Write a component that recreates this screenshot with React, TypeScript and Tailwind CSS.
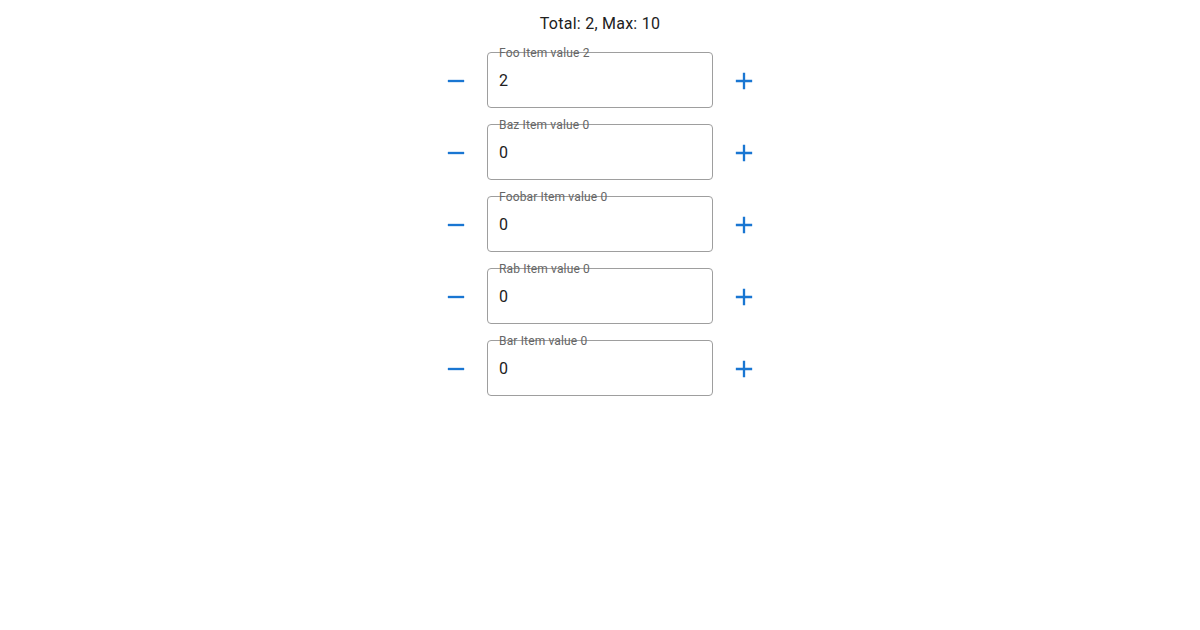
import { useState } from "react";

const ITEMS = ["Foo", "Baz", "Foobar", "Rab", "Bar"];

function MinusIcon() {
  return (
    <svg viewBox="0 0 24 24" className="w-7 h-7" fill="#1976d2">
      <path d="M19 13H5v-2h14v2z" />
    </svg>
  );
}

function PlusIcon() {
  return (
    <svg viewBox="0 0 24 24" className="w-7 h-7" fill="#1976d2">
      <path d="M19 13h-6v6h-2v-6H5v-2h6V5h2v6h6v2z" />
    </svg>
  );
}

export default function App() {
  const [values, setValues] = useState<number[]>([2, 0, 0, 0, 0]);
  const max = 10;
  const total = values.reduce((a, b) => a + b, 0);

  const change = (i: number, d: number) => {
    setValues(v => v.map((x, j) => (j === i ? Math.max(0, x + d) : x)));
  };

  return (
    <div className="w-[1200px] h-[630px] bg-white flex flex-col items-center pt-[12px] font-['Roboto',sans-serif] text-[#212121]">
      <div className="text-base leading-6 tracking-[0.25px]">Total: {total}, Max: {max}</div>
      <div className="flex flex-col gap-4 mt-[16px]">
        {ITEMS.map((name, i) => (
          <div key={name} className="flex items-center">
            <button onClick={() => change(i, -1)} className="w-10 h-10 flex items-center justify-center rounded-full mt-[2px]">
              <MinusIcon />
            </button>
            <div className="relative w-[226px] h-14 mx-[11px] border border-[#9e9e9e] rounded">
              <span className="absolute left-[11px] -top-[8px] text-xs leading-4 text-[#666666] whitespace-nowrap tracking-[0.15px]">
                {name} Item value {values[i]}
              </span>
              <input
                className="w-full h-full pl-[11px] pr-3 text-base outline-none bg-transparent tracking-[0.15px]"
                value={values[i]}
                onChange={e => {
                  const n = parseInt(e.target.value) || 0;
                  setValues(v => v.map((x, j) => (j === i ? n : x)));
                }}
              />
            </div>
            <button onClick={() => change(i, 1)} className="w-10 h-10 flex items-center justify-center rounded-full mt-[2px]">
              <PlusIcon />
            </button>
          </div>
        ))}
      </div>
    </div>
  );
}
